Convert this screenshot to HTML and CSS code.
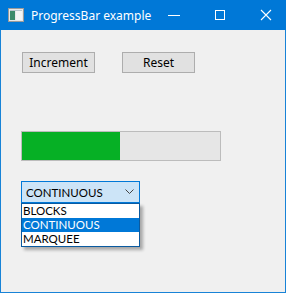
FILE: index.html
```html
<!DOCTYPE html>
<html lang="en">
<head>
    <meta charset="UTF-8">
    <title>ProgressBar example</title>
    <link rel="stylesheet" href="styles.css">
</head>
<body>
    <div class="window">
        <div class="titlebar">
            <svg class="app-icon" width="16" height="14" viewBox="0 0 16 14">
                <rect x="0.5" y="0.5" width="15" height="13" fill="#e8e8e8" stroke="#9a9a9a"/>
                <rect x="2" y="2" width="5" height="10" fill="#3c8a6a"/>
                <rect x="8" y="2" width="6" height="10" fill="#f4f4f4"/>
                <rect x="2" y="2" width="12" height="1" fill="#b8c4cc"/>
            </svg>
            <span class="title">ProgressBar example</span>
            <div class="controls">
                <div class="ctl">
                    <svg width="12" height="12" viewBox="0 0 12 12"><line x1="0" y1="6.5" x2="12" y2="6.5" stroke="#fff"/></svg>
                </div>
                <div class="ctl">
                    <svg width="12" height="12" viewBox="0 0 12 12"><rect x="1.5" y="1.5" width="9" height="9" fill="none" stroke="#fff"/></svg>
                </div>
                <div class="ctl">
                    <svg width="12" height="12" viewBox="0 0 12 12"><path d="M1 1 L11 11 M11 1 L1 11" stroke="#fff" stroke-width="1.1"/></svg>
                </div>
            </div>
        </div>
        <div class="client">
            <div class="buttons">
                <button class="btn">Increment</button>
                <button class="btn">Reset</button>
            </div>
            <div class="progress">
                <div class="fill" style="width: 98px"></div>
            </div>
            <div class="combo-wrap">
                <div class="combo">
                    <span>CONTINUOUS</span>
                    <svg width="9" height="6" viewBox="0 0 9 6"><path d="M0.5 0.5 L4.5 4.5 L8.5 0.5" fill="none" stroke="#444"/></svg>
                </div>
                <ul class="droplist">
                    <li>BLOCKS</li>
                    <li class="selected">CONTINUOUS</li>
                    <li>MARQUEE</li>
                </ul>
            </div>
        </div>
    </div>
</body>
</html>
```

FILE: styles.css
```css
body {
    margin: 0;
    font-family: "Noto Sans", "Open Sans", sans-serif;
    font-size: 12px;
}

.window {
    width: 286px;
    height: 293px;
    box-sizing: border-box;
    border: 1px solid #1883d7;
    border-top: none;
    background-color: #f0f0f0;
    display: flex;
    flex-direction: column;
}

/* Title bar */
.titlebar {
    height: 30px;
    margin: 0 -1px;
    background-color: #0078d7;
    color: #fff;
    display: flex;
    align-items: center;
}

.app-icon {
    flex-shrink: 0;
    margin-left: 8px;
    margin-right: 7px;
}

.title {
    font-size: 12px;
    white-space: nowrap;
}

.controls {
    margin-left: auto;
    display: flex;
    height: 100%;
    flex-shrink: 0;
}

.ctl {
    width: 46px;
    display: flex;
    align-items: center;
    justify-content: center;
}

/* Client area */
.client {
    padding: 22px 0 0 20px;
}

.buttons {
    display: flex;
    gap: 27px;
    padding-left: 1px;
}

.btn {
    width: 73px;
    height: 21px;
    padding: 0;
    border: 1px solid #adadad;
    background-color: #e1e1e1;
    font-family: inherit;
    font-size: 12px;
    color: #000;
}

.progress {
    margin-top: 58px;
    width: 200px;
    height: 30px;
    box-sizing: border-box;
    border: 1px solid #bcbcbc;
    background-color: #e6e6e6;
}

.progress .fill {
    height: 100%;
    background-color: #06b025;
}

.combo-wrap {
    position: relative;
    margin-top: 20px;
    width: 119px;
    font-family: Lato, "Noto Sans", sans-serif;
    font-size: 11.5px;
}

.combo {
    height: 22px;
    box-sizing: border-box;
    border: 1px solid #0078d7;
    background-color: #cce4f7;
    display: flex;
    align-items: center;
    justify-content: space-between;
    padding: 0 5px 0 4px;
}

.droplist {
    position: absolute;
    top: 22px;
    left: 0;
    width: 119px;
    box-sizing: border-box;
    margin: 0;
    padding: 0;
    list-style: none;
    background-color: #fff;
    border: 1px solid #0a5aa0;
    box-shadow: 3px 3px 3px rgba(0, 0, 0, 0.3);
}

.droplist li {
    height: 14px;
    line-height: 14px;
    padding-left: 1px;
}

.droplist li.selected {
    background-color: #0078d7;
    color: #fff;
}
```
